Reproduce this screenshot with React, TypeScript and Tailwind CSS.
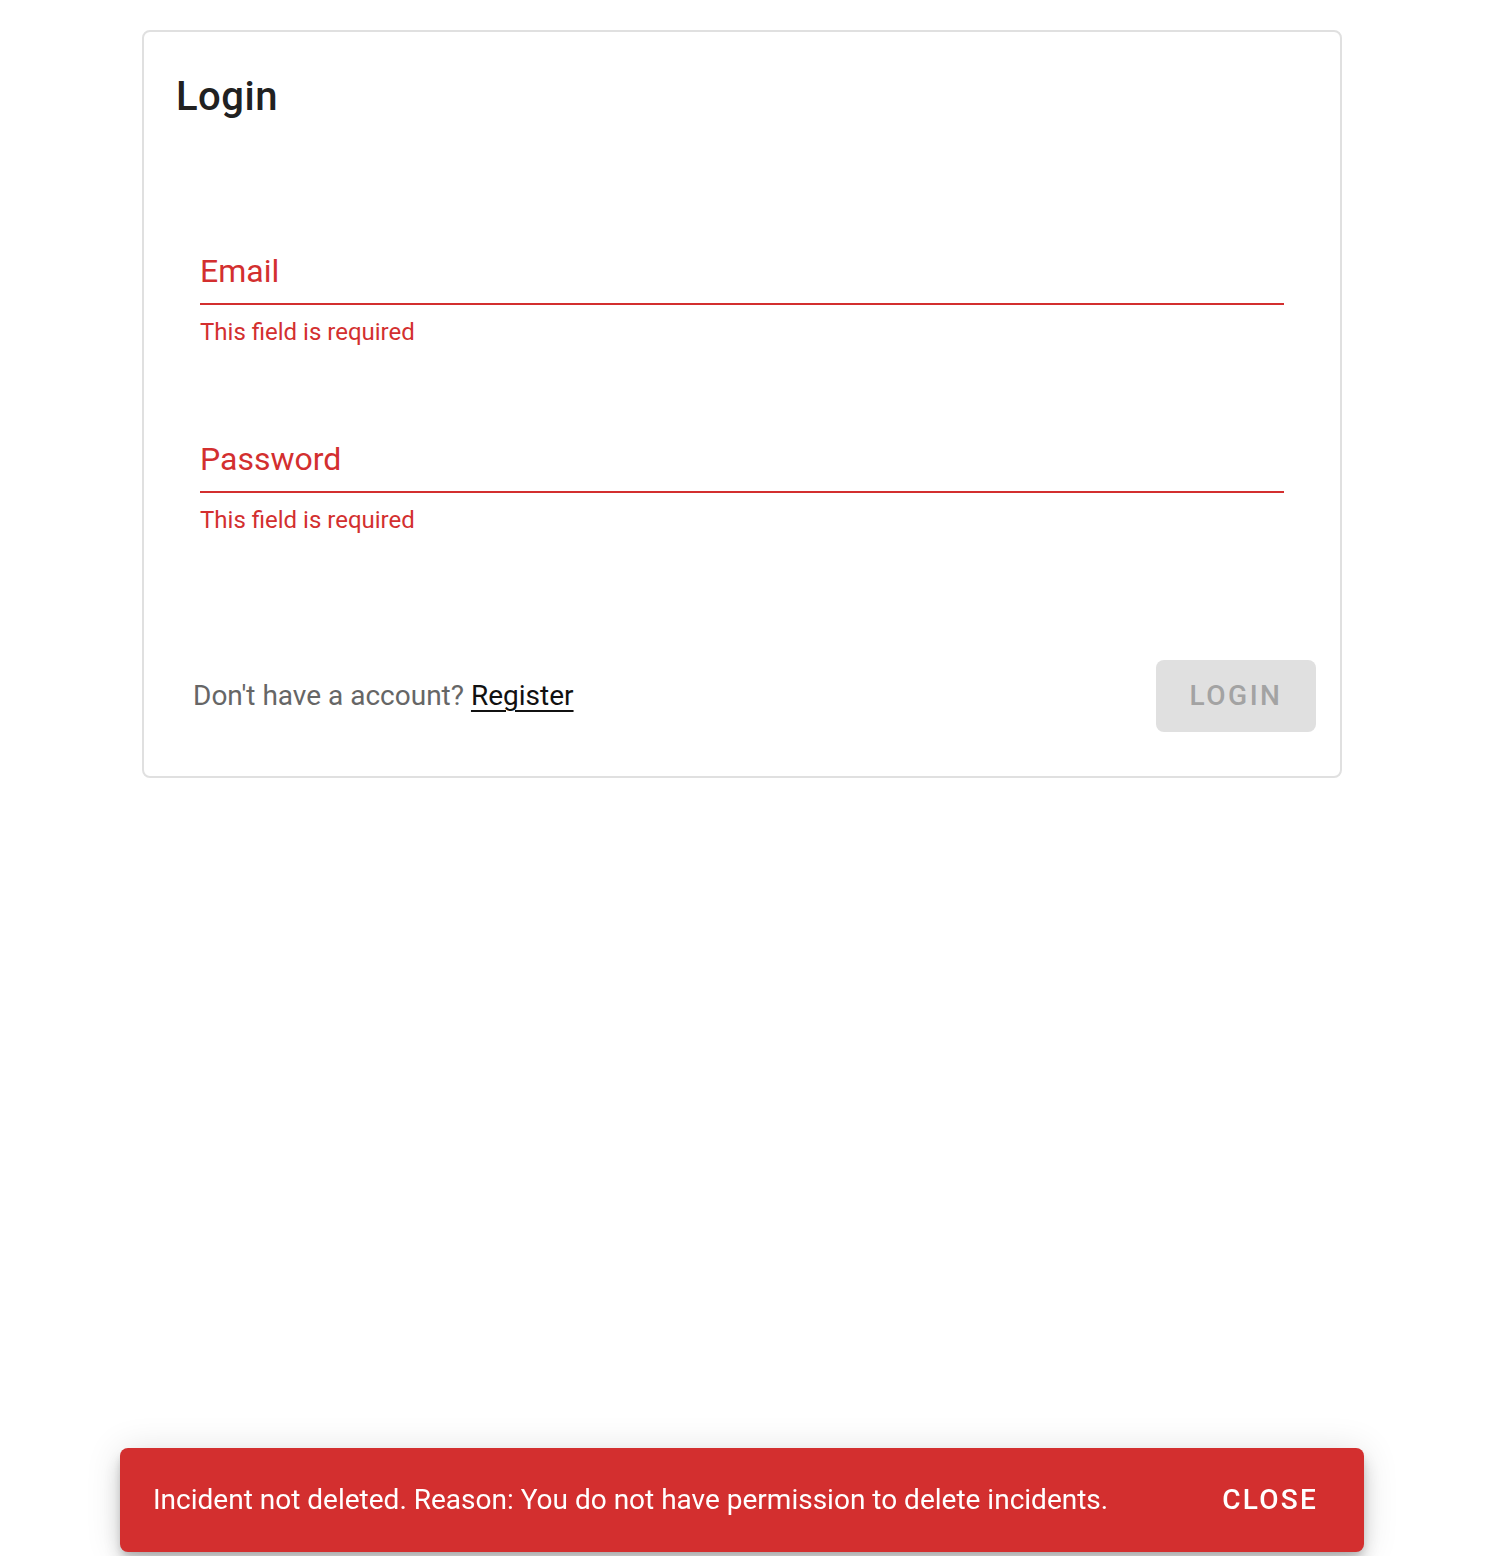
import { useState } from 'react';

const font = { fontFamily: 'Roboto, "Noto Sans", sans-serif' };

const Field = ({ label }: { label: string }) => (
  <div>
    <div className="border-b-2 border-[#d32f2f] pb-[12px]">
      <label className="block text-[32px] leading-[40px] text-[#d32f2f]">{label}</label>
    </div>
    <div className="mt-[11px] text-[24px] leading-[32px] text-[#d32f2f]">This field is required</div>
  </div>
);

const App = () => {
  const [open, setOpen] = useState(true);

  return (
    <div className="min-h-screen bg-white" style={font}>
      <div className="flex w-[1484px] justify-center pt-[30px]">
        <div className="w-[1200px] rounded-[8px] border-2 border-[#e0e0e0] bg-white pt-[33px] pb-[44px]">
          <h1 className="px-[32px] text-[40px] leading-[64px] font-medium tracking-[0.0125em] text-[#212121]">Login</h1>

          <form className="mt-[122px] flex flex-col gap-[91px] px-[56px]">
            <Field label="Email" />
            <Field label="Password" />
          </form>

          <div className="mt-[124px] flex items-center justify-between pl-[49px] pr-[24px]">
            <span className="text-[28px] leading-[36px] text-[#666666]">
              Don't have a account?{' '}
              <a href="#" className="text-[#111111] underline decoration-[2px] underline-offset-[5px]">Register</a>
            </span>
            <button
              disabled
              className="flex h-[72px] w-[160px] items-center justify-center rounded-[8px] bg-[#e0e0e0] text-[28px] font-medium tracking-[0.09em] text-[#a3a3a3]"
            >
              LOGIN
            </button>
          </div>
        </div>
      </div>

      {open && (
        <div className="fixed bottom-[4px] left-[120px] flex h-[104px] w-[1244px] items-center justify-between rounded-[8px] bg-[#d32f2f] pl-[33px] pr-[38px] shadow-[0_6px_10px_-2px_rgba(0,0,0,0.2),0_12px_20px_0_rgba(0,0,0,0.14),0_2px_36px_0_rgba(0,0,0,0.12)]">
          <span className="text-[28px] leading-[40px] text-white">
            Incident not deleted. Reason: You do not have permission to delete incidents.
          </span>
          <button
            onClick={() => setOpen(false)}
            className="px-[8px] text-[28px] font-medium tracking-[0.08em] text-white"
          >
            CLOSE
          </button>
        </div>
      )}
    </div>
  );
};

export default App;
